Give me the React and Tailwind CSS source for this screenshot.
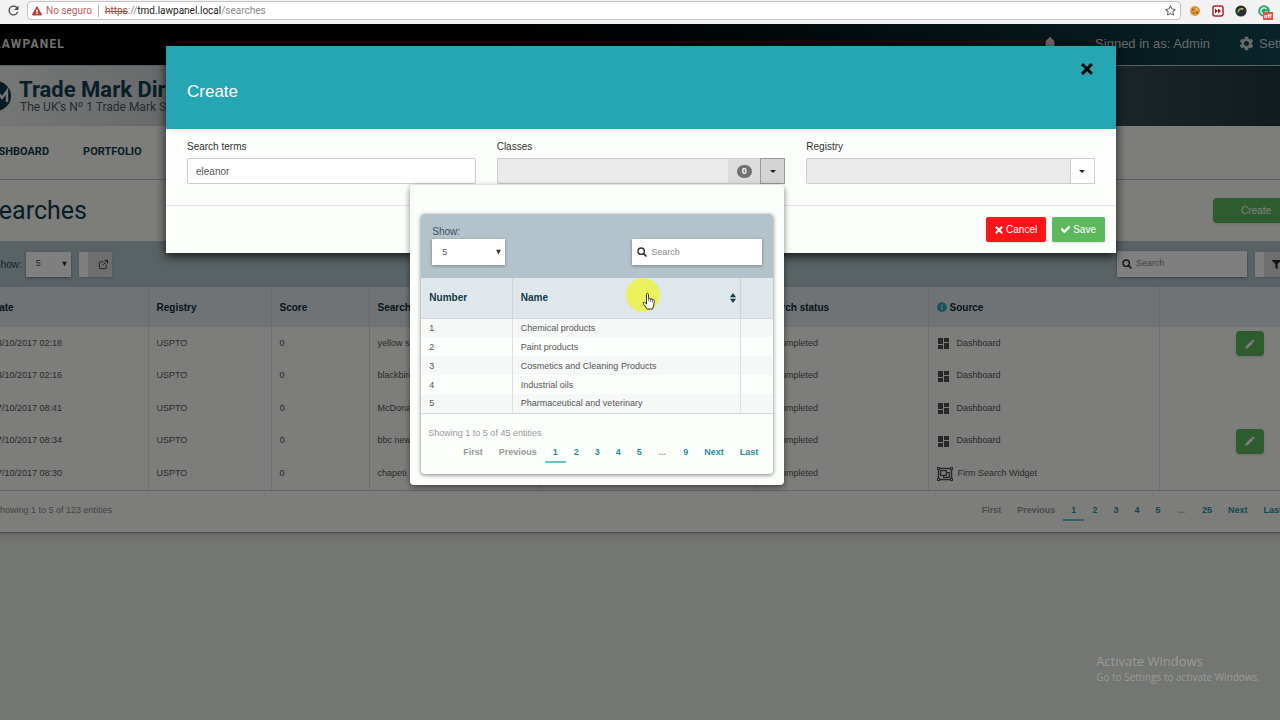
import { useState } from 'react'
import {
  FaCheck,
  FaExclamationTriangle,
  FaFilter,
  FaInfoCircle,
  FaRegObjectGroup,
  FaRegStar,
} from 'react-icons/fa'
import { MdEdit, MdNotifications, MdRefresh, MdSettings } from 'react-icons/md'
import { FiExternalLink } from 'react-icons/fi'

const searches = [
  { date: '13/10/2017 02:18', term: 'yellow sun', source: 'Dashboard', editable: true },
  { date: '13/10/2017 02:16', term: 'blackbird', source: 'Dashboard' },
  { date: '07/10/2017 08:41', term: 'McDonalds', source: 'Dashboard' },
  { date: '07/10/2017 08:34', term: 'bbc news', source: 'Dashboard', editable: true },
  { date: '07/10/2017 08:30', term: 'chapeti', source: 'Firm Search Widget', marks: 3 },
]

const classes = [
  { number: 1, name: 'Chemical products' },
  { number: 2, name: 'Paint products' },
  { number: 3, name: 'Cosmetics and Cleaning Products' },
  { number: 4, name: 'Industrial oils' },
  { number: 5, name: 'Pharmaceutical and veterinary' },
]

function BrowserBar() {
  return (
    <div className="flex h-6 items-start bg-[#f2f2f2] font-[Roboto,sans-serif] text-[10px]">
      <button type="button" aria-label="Reload" className="flex h-5 w-[27px] items-center justify-center text-[#505050]">
        <MdRefresh className="h-[15px] w-[15px]" />
      </button>
      <div className="mt-px flex h-[19px] flex-1 items-center rounded-sm border border-[#c4c4c4] bg-white px-1">
        <FaExclamationTriangle className="h-[10px] w-[10px] text-[#b8413b]" />
        <span className="ml-1 text-[#b8605a]">No seguro</span>
        <span className="mx-1.5 h-3 w-px bg-[#b5b5b5]" />
        <span className="text-[#b8413b] line-through">https</span>
        <span className="text-[#888]">://</span>
        <span className="text-[#222]">tmd.lawpanel.local</span>
        <span className="text-[#888]">/searches</span>
        <FaRegStar className="ml-auto h-[11px] w-[11px] text-[#555]" />
      </div>
      <div className="flex h-[21px] w-[99px] items-center gap-[11px] pl-2">
        {/* Cookie */}
        <svg viewBox="0 0 12 12" className="h-3 w-3">
          <circle cx="6" cy="6" r="5" fill="#d8983c" />
          <circle cx="4" cy="4.5" r="1" fill="#8a4f1c" />
          <circle cx="7.6" cy="4" r="0.9" fill="#f4cf77" />
          <circle cx="8" cy="7.5" r="1" fill="#8a4f1c" />
          <circle cx="4.6" cy="8" r="0.9" fill="#a5642a" />
        </svg>
        {/* Fast forward */}
        <svg viewBox="0 0 12 12" className="h-3 w-3">
          <rect x="1" y="1" width="10" height="10" rx="2" fill="#fff" stroke="#b3202c" strokeWidth="1.5" />
          <path d="M3 3.4 6 6 3 8.6zM6 3.4 9 6 6 8.6z" fill="#a3101c" />
        </svg>
        {/* Gauge */}
        <svg viewBox="0 0 12 12" className="h-3 w-3">
          <circle cx="6" cy="6" r="5.6" fill="#2c2d35" />
          <path d="M3.5 7.5A3 3 0 0 1 5.6 3.8" fill="none" stroke="#5fc35a" strokeWidth="1.6" />
          <path d="M5.6 3.8 8.4 4" fill="none" stroke="#f0c944" strokeWidth="1.6" />
        </svg>
        <div className="relative">
          <svg viewBox="0 0 12 12" className="h-3 w-3">
            <circle cx="6" cy="6" r="5.8" fill="#23ab6e" />
            <path d="M8.6 4.2A3.2 3.2 0 1 0 9 7H6.8" fill="none" stroke="#fff" strokeWidth="1.2" />
          </svg>
          <span className="absolute top-[7px] left-[5px] bg-[#dc5349] px-px text-[6px] leading-[8px] font-bold text-white">off</span>
        </div>
      </div>
    </div>
  )
}

function CrossIcon({ className }) {
  return (
    <svg viewBox="0 0 12 12" className={className}>
      <path d="M2.200 2.200l7.600 7.600M9.800 2.200L2.200 9.800" fill="none" stroke="currentColor" strokeWidth="3" strokeLinecap="square" />
    </svg>
  )
}

function SearchIcon({ className }) {
  return (
    <svg viewBox="0 0 12 12" className={className}>
      <circle cx="5" cy="5" r="3.800" fill="none" stroke="currentColor" strokeWidth="1.700" />
      <path d="M7.900 7.900l2.900 2.900" stroke="currentColor" strokeWidth="2.100" strokeLinecap="round" />
    </svg>
  )
}

function SortIcon() {
  return (
    <svg viewBox="0 0 6 10" className="-mr-1 h-[10px] w-[6px]">
      <path d="M3 0l3 4.300H0zM3 10l3-4.300H0z" fill="currentColor" />
    </svg>
  )
}

function DashboardIcon() {
  return (
    <svg viewBox="0 0 11 11" className="ml-px h-[11px] w-[11px]">
      <path d="M0 0h5v6H0zM6 0h5v4H6zM0 7h5v4H0zM6 5h5v6H6z" fill="#505050" />
    </svg>
  )
}

function Caret() {
  return (
    <svg viewBox="0 0 6 3" className="h-[3px] w-[6px]">
      <path d="M0 0h6L3 3z" fill="#222" />
    </svg>
  )
}

function PageSelect({ id, className }) {
  return (
    <div className={`relative ${className}`}>
      <select id={id} className="block h-full w-full appearance-none bg-white pl-[10px] text-[9px] text-[#555] shadow-[0_1px_3px_rgba(0,0,0,0.35)]">
        <option>5</option>
        <option>10</option>
      </select>
      <svg viewBox="0 0 6 6" className="pointer-events-none absolute top-1/2 right-1 h-[5px] w-[5px] -translate-y-1/2">
        <path d="M0 0h6L3 6z" fill="#333" />
      </svg>
    </div>
  )
}

function SearchBox({ label }) {
  return (
    <label className="flex h-[26px] w-[130px] items-center bg-white px-[5px] shadow-[0_1px_3px_rgba(0,0,0,0.35)]">
      <SearchIcon className="h-[10px] w-[10px] shrink-0 text-[#333]" />
      <input type="search" aria-label={label} placeholder="Search" className="ml-1 w-full min-w-0 text-[9px] text-[#555] outline-none placeholder:text-[#888]" />
    </label>
  )
}

function Pagination({ last }) {
  const pages = ['1', '2', '3', '4', '5', '...', last, 'Next', 'Last']
  return (
    <nav className="flex text-[9px] leading-[18px] font-bold text-[#26909a]">
      <a href="#" className="px-2 text-[#999]">First</a>
      <a href="#" className="px-2 text-[#999]">Previous</a>
      {pages.map((page, i) =>
        page === '...' ? (
          <span key={page} className="px-[9px] text-[#999]">...</span>
        ) : (
          <a key={page} href="#" className={i === 0 ? 'border-b-2 border-[#26a6b3]/70 px-2' : 'px-2'}>{page}</a>
        )
      )}
    </nav>
  )
}

function SearchesPage() {
  return (
    <div className="-mr-15 -ml-4">
      <header className="flex h-[42px] items-center justify-between border-b border-[#b0c4cb] bg-linear-to-r from-black via-[#02080a] to-[#14505a] pr-[34px] pb-0.5 pl-[10px]">
        <span className="font-[Roboto,sans-serif] text-[12px] font-bold tracking-widest text-[#e4e4e4]">LAWPANEL</span>
        <div className="flex items-center text-[13px] text-[#d0d4d4]">
          <MdNotifications className="mr-[36px] h-[18px] w-[18px]" />
          <span className="mr-7">Signed in as: Admin</span>
          <a href="#" className="flex items-center gap-1">
            <MdSettings className="h-[17px] w-[17px]" />
            Settings
          </a>
        </div>
      </header>

      <div className="flex h-[60px] items-center bg-linear-to-r from-[#eeeff0] via-[#7f8c90] to-[#182f38] font-[Roboto,sans-serif]">
        <svg viewBox="0 0 32 32" className="-ml-px h-8 w-8 shrink-0">
          <circle cx="13" cy="16" r="15" fill="#0d3748" />
          <path d="M1 11h9M5.500 11v11M14 22V11l5 7 5-7v11" fill="none" stroke="#e8e8e8" strokeWidth="2.400" />
        </svg>
        <div className="ml-1 whitespace-nowrap">
          <p className="text-[22px] leading-[22px] font-bold text-[#123e50]">Trade Mark Direct</p>
          <p className="pl-px text-[12px] leading-[12px] text-[#4a5a62]">The UK's Nº 1 Trade Mark Service</p>
        </div>
      </div>

      <nav className="flex h-[54px] items-center gap-[34px] border-b border-[#bbb] bg-[#fbfdf9] font-[Roboto,sans-serif] text-[11px] font-bold text-[#123a4c] shadow-sm">
        <a href="#">DASHBOARD</a>
        <a href="#">PORTFOLIO</a>
      </nav>

      <main className="border-b border-[#9a9a9a] bg-[#fafcf7] shadow-md">
        <div className="flex h-[61px] items-center justify-between pr-[41px]">
          <h1 className="font-[Roboto,sans-serif] text-[25px] text-[#123a4c]">Searches</h1>
          <button type="button" className="h-[25px] w-[86px] rounded-sm bg-[#5cb85c] text-[10px] text-white shadow">Create</button>
        </div>

        <div className="flex h-[46px] items-center justify-between bg-[#b2c4c9] pr-[52px] pl-[10px]">
          <div className="flex items-center">
            <label htmlFor="page-size" className="text-[10px] text-[#37474f]">Show:</label>
            <PageSelect id="page-size" className="ml-1 h-[25px] w-[45px]" />
            <div className="ml-2 flex h-[25px] shadow">
              <span className="w-[9px] bg-white" />
              <button type="button" aria-label="Export" className="flex w-6 items-center justify-center bg-[#dcdcdc] pl-2 text-[#333]">
                <FiExternalLink className="h-[11px] w-[11px]" />
              </button>
            </div>
          </div>
          <div className="flex items-center gap-2">
            <SearchBox label="Filter searches" />
            <div className="flex h-[25px] shadow">
              <span className="w-[9px] bg-white" />
              <button type="button" aria-label="Filter" className="flex w-6 items-center justify-center bg-[#dcdcdc] text-[#222]">
                <FaFilter className="h-[9px] w-[9px]" />
              </button>
            </div>
          </div>
        </div>

        <table className="w-full table-fixed border-collapse text-left text-[9px] text-[#555] [&_td]:px-2 [&_td+td]:border-l [&_td+td]:border-[#dde1e1] [&_th]:px-2 [&_th+th]:border-l [&_th+th]:border-[#ccd4d8]">
          <colgroup>
            <col className="w-[164px]" />
            <col className="w-[123px]" />
            <col className="w-[98px]" />
            <col className="w-[171px]" />
            <col className="w-[215px]" />
            <col className="w-[173px]" />
            <col className="w-[231px]" />
            <col />
          </colgroup>
          <thead>
            <tr className="h-10 bg-[#dfe7ec] text-[10px] text-[#0d2c38]">
              <th>Date</th>
              <th>Registry</th>
              <th>Score</th>
              <th>Search term</th>
              <th>Classes</th>
              <th>Search status</th>
              <th>
                <span className="flex items-center gap-[3px]">
                  <FaInfoCircle className="h-[10px] w-[10px] text-[#26a6b3]" />
                  Source
                </span>
              </th>
              <th aria-label="Actions" />
            </tr>
          </thead>
          <tbody>
            {searches.map((row) => (
              <tr key={row.date} className="h-8 odd:h-[33px]">
                <td>{row.date}</td>
                <td>USPTO</td>
                <td>0</td>
                <td>{row.term}</td>
                <td>
                  {row.marks && (
                    <span className="flex gap-0.5">
                      {Array.from({ length: row.marks }, (_, i) => (
                        <span key={i} className="h-[22px] w-[22px] rounded-full bg-[#222]" />
                      ))}
                    </span>
                  )}
                </td>
                <td>
                  <span className="ml-[11px]">Completed</span>
                </td>
                <td>
                  {row.source === 'Dashboard' ? (
                    <span className="flex items-center gap-2">
                      <DashboardIcon />
                      {row.source}
                    </span>
                  ) : (
                    <span className="flex items-center gap-[5px]">
                      <FaRegObjectGroup className="h-4 w-4 text-[#555]" />
                      {row.source}
                    </span>
                  )}
                </td>
                <td>
                  {row.editable && (
                    <button type="button" aria-label="Edit" className="mx-auto flex h-[25px] w-7 items-center justify-center rounded-sm bg-[#5cb85c] text-white shadow">
                      <MdEdit className="h-3 w-3" />
                    </button>
                  )}
                </td>
              </tr>
            ))}
          </tbody>
        </table>

        <div className="flex h-[42px] items-center justify-between border-t border-[#c9cdca] pr-[50px] pb-px pl-[10px]">
          <p className="text-[9px] text-[#888]">Showing 1 to 5 of 123 entities</p>
          <Pagination last="25" />
        </div>
      </main>
    </div>
  )
}

function ClassPicker() {
  return (
    <div className="absolute top-full right-px mt-px w-[374px] rounded-sm bg-[#fcfefc] px-[11px] pt-[29px] pb-[11px] shadow-[0_2px_6px_rgba(0,0,0,0.5)]">
      <div className="overflow-hidden rounded shadow-[0_1px_4px_rgba(0,0,0,0.5)]">
        <div className="flex h-16 items-end justify-between bg-[#b2c3cb] px-[11px] pb-[13px]">
          <div>
            <label htmlFor="class-size" className="block text-[10px] leading-[14px] text-[#37525e]">Show:</label>
            <PageSelect id="class-size" className="h-[26px] w-[73px]" />
          </div>
          <SearchBox label="Filter classes" />
        </div>

        <table className="w-full table-fixed border-collapse border-b border-[#d3d8da] text-left text-[9px] text-[#555] [&_td]:px-2 [&_td+td]:border-l [&_td+td]:border-[#dcdfe0] [&_th]:px-2 [&_th+th]:border-l [&_th+th]:border-[#ccd4d8]">
          <colgroup>
            <col className="w-[91px]" />
            <col />
            <col className="w-[33px]" />
          </colgroup>
          <thead>
            <tr className="h-10 border-b border-[#d3d8da] bg-[#dfe7ec] text-[10px] text-[#123a48]">
              <th>Number</th>
              <th>
                <span className="flex items-center justify-between">
                  Name
                  <SortIcon />
                </span>
              </th>
              <th aria-label="Select" />
            </tr>
          </thead>
          <tbody>
            {classes.map((item) => (
              <tr key={item.number} className="h-[19px] odd:bg-[#f6f8f7]">
                <td>{item.number}</td>
                <td>{item.name}</td>
                <td />
              </tr>
            ))}
          </tbody>
        </table>

        <div className="pt-[13px] pb-[11px]">
          <p className="pl-[7px] text-[9px] leading-[12px] text-[#999]">Showing 1 to 5 of 45 entities</p>
          <div className="mt-1 flex justify-end pr-[7px]">
            <Pagination last="9" />
          </div>
        </div>
      </div>
    </div>
  )
}

function CreateModal() {
  const [terms, setTerms] = useState('eleanor')

  return (
    <section role="dialog" aria-label="Create" className="relative mx-auto w-full max-w-[950px] bg-[#fcfefc] shadow-[0_3px_10px_rgba(0,0,0,0.8)]">
      <div className="flex h-[83px] items-start justify-between bg-[#26a6b3] px-[21px] pt-4">
        <h2 className="mt-[17px] text-[17px] leading-[26px] text-white">Create</h2>
        <button type="button" aria-label="Close" className="mt-px mr-[2px] text-black">
          <CrossIcon className="h-[12px] w-[12px]" />
        </button>
      </div>

      <div className="grid grid-cols-3 gap-[21px] px-[21px] pt-3 pb-[21px] text-[10px] leading-3 text-[#333]">
        <div>
          <label htmlFor="terms" className="mb-[5px] block">Search terms</label>
          <input
            id="terms"
            value={terms}
            onChange={(e) => setTerms(e.target.value)}
            className="h-[26px] w-full rounded-xs border border-[#ccc] bg-white px-2 text-[10px] text-[#555]"
          />
        </div>
        <div className="relative">
          <label htmlFor="classes" className="mb-[5px] block">Classes</label>
          <div className="flex h-[26px]">
            <input id="classes" readOnly className="min-w-0 flex-1 rounded-l-xs border border-r-0 border-[#ccc] bg-[#ebebeb]" />
            <span className="flex w-8 items-center justify-center border-y border-[#ccc] bg-[#dcdcdc]">
              <span className="rounded-full bg-[#717171] px-[5px] text-[9px] leading-[13px] font-bold text-white">0</span>
            </span>
            <button type="button" aria-label="Choose classes" className="flex w-[25px] items-center justify-center border border-[#999] bg-[#d4d4d4]">
              <Caret />
            </button>
          </div>
          <ClassPicker />
        </div>
        <div>
          <label htmlFor="registry" className="mb-[5px] block">Registry</label>
          <div className="flex h-[26px]">
            <input id="registry" readOnly className="min-w-0 flex-1 rounded-l-xs border border-r-0 border-[#ccc] bg-[#ebebeb]" />
            <button type="button" aria-label="Choose registry" className="flex w-[25px] items-center justify-center border border-[#ccc] bg-white">
              <Caret />
            </button>
          </div>
        </div>
      </div>

      <div className="flex justify-end gap-[6px] border-t border-[#e5e5e5] py-[11px] pr-[11px] text-[10px] text-white">
        <button type="button" className="flex h-[25px] items-center gap-[3px] rounded-xs bg-[#fb1518] px-[9px] shadow">
          <CrossIcon className="h-2 w-2" />
          Cancel
        </button>
        <button type="button" className="flex h-[25px] items-center gap-[3px] rounded-xs bg-[#5cb85c] px-[9px] shadow">
          <FaCheck className="h-[9px] w-[9px]" stroke="currentColor" strokeWidth="50" />
          Save
        </button>
      </div>
    </section>
  )
}

function Pointer() {
  return (
    <svg viewBox="0 0 36 36" className="pointer-events-none absolute top-[277px] left-1/2 ml-[-14px] h-9 w-9">
      <circle cx="17" cy="18" r="17" fill="#eef23a" fillOpacity="0.8" />
      <path
        d="M20.500 17.500c0-1.500 2-1.500 2 0v4l4.500 1c1.200.3 1.500 1 1.300 2.200l-.8 4.300-1 3h-5.500l-3.500-5c-1-1.500.5-2.300 1.600-1.300l1.400 1.300z"
        fill="#fff"
        stroke="#333"
        strokeWidth="1"
      />
      <path d="M22.500 21.500v3M24.500 22v3M26.500 22.500v3" stroke="#555" strokeWidth="0.700" />
    </svg>
  )
}

function App() {
  return (
    <div className="relative flex min-h-screen flex-col overflow-hidden bg-[#e9ece7] font-['Liberation_Sans',Arial,sans-serif]">
      <BrowserBar />
      <div className="relative flex-1">
        <SearchesPage />
        <div className="absolute inset-0 bg-black/50 pt-[22px] pl-0.5">
          <CreateModal />
        </div>
      </div>
      <Pointer />
      <div className="absolute right-5 bottom-9 font-['Open_Sans',sans-serif] text-[#9a9c99]">
        <p className="text-[13px] leading-[18px]">Activate Windows</p>
        <p className="text-[10px] leading-[14px]">Go to Settings to activate Windows.</p>
      </div>
    </div>
  )
}

export default App
